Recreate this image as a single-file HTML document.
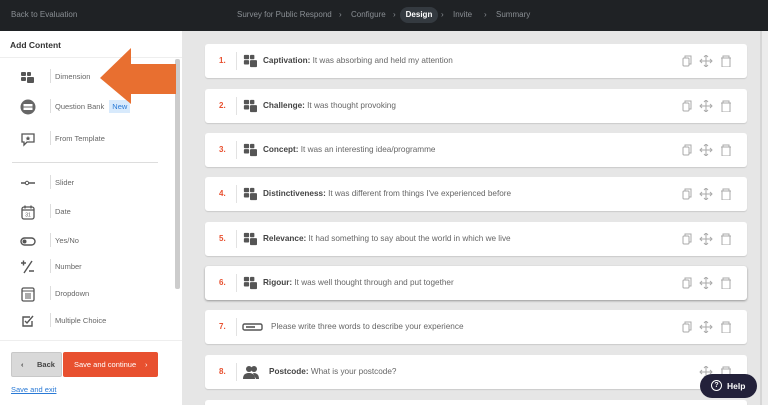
<!DOCTYPE html>
<html><head><meta charset="utf-8"><style>
*{box-sizing:border-box;margin:0;padding:0}
html{width:768px;height:405px;overflow:hidden}
body{width:768px;height:405px;overflow:hidden;background:#e6e6e6;font-family:"Liberation Sans",sans-serif;position:relative}
.hdr{position:absolute;left:0;top:0;width:768px;height:31px;background:#1f2225;color:#8a8f94;font-size:8px}
.hdr span{position:absolute;top:10px}
.pill{position:absolute;left:400px;top:7px;width:38px;height:16px;border-radius:8px;background:#343a40;color:#fff;font-weight:bold;text-align:center;line-height:16px}
.left{position:absolute;left:0;top:31px;width:182px;height:374px;background:#fff}
.item{position:absolute;left:0;width:170px;height:20px}
.item .ic{position:absolute;left:20px;top:2px;width:16px;height:16px}
.item .sep{position:absolute;left:50px;top:2px;width:1px;height:14px;background:#ddd}
.item .t{position:absolute;left:55px;top:5px;font-size:7.5px;color:#666}
.card{position:absolute;left:205px;width:542px;height:34px;background:#fff;border-radius:3px;box-shadow:0 1px 1px rgba(0,0,0,.12)}
.card .n{position:absolute;left:14px;top:12px;font-size:8px;font-weight:bold;color:#e8502f}
.card .vs{position:absolute;left:31px;top:8px;width:1px;height:18px;background:#e2e2e2}
.card .ic{position:absolute;left:38px;top:10px}
.card .t{position:absolute;left:58px;top:12px;font-size:8.2px;color:#666}
.card .t b{color:#444}
.act{position:absolute;right:14px;top:11px;width:52px;height:12px}
</style></head><body>
<div class="hdr">
<span style="left:11px">Back to Evaluation</span>
<span style="left:237px">Survey for Public Respond</span>
<span style="left:339px">›</span>
<span style="left:351px">Configure</span>
<span style="left:393px">›</span>
<div class="pill">Design</div>
<span style="left:441px">›</span>
<span style="left:453px">Invite</span>
<span style="left:484px">›</span>
<span style="left:496px">Summary</span>
</div>
<div class="left">
<div style="position:absolute;left:10px;top:9px;font-size:8.5px;font-weight:bold;color:#333">Add Content</div>
<div style="position:absolute;left:0;top:26px;width:182px;height:1px;background:#eee"></div>
<div style="position:absolute;left:175px;top:28px;width:5px;height:230px;background:#ccc;border-radius:2px"></div>
<div style="position:absolute;left:12px;top:131px;width:146px;height:1px;background:#ddd"></div>
<div style="position:absolute;left:0;top:309px;width:182px;height:1px;background:#eee"></div>
<div style="position:absolute;left:11px;top:321px;width:51px;height:25px;background:#d9d9d9;border:1px solid #c8c8c8;border-radius:2px;font-size:7.5px;font-weight:bold;color:#444;line-height:23px"><span style="position:absolute;left:9px">‹</span><span style="position:absolute;left:25px">Back</span></div>
<div style="position:absolute;left:63px;top:321px;width:95px;height:25px;background:#e8502f;border-radius:2px;font-size:7.5px;color:#fff;line-height:25px"><span style="position:absolute;left:11px">Save and continue</span><span style="position:absolute;left:82px">›</span></div>
<div style="position:absolute;left:11px;top:354px;font-size:7.5px;color:#2a7ad6;text-decoration:underline">Save and exit</div>
</div>
<div class="item" style="top:67px"><svg class="ic" viewBox="0 0 16 16"><rect x="1" y="3" width="5" height="4" rx="1" fill="#555"/><rect x="7" y="3" width="4" height="4" rx="1" fill="#555"/><rect x="1" y="8" width="5" height="4" rx="1" fill="#555"/><rect x="7" y="8" width="7" height="6" rx="1" fill="#555"/></svg><div class="sep"></div><div class="t">Dimension</div></div>
<div class="item" style="top:97px"><svg class="ic" viewBox="0 0 16 16"><circle cx="8" cy="8" r="7.5" fill="#666"/><rect x="3.5" y="5" width="9" height="2.5" fill="#fff"/><rect x="3.5" y="8.5" width="9" height="2.5" fill="#fff"/></svg><div class="sep"></div><div class="t">Question Bank <span style="background:#d8eafc;color:#2a7ad6;padding:2px 3px;margin-left:3px">New</span></div></div>
<div class="item" style="top:129px"><svg class="ic" viewBox="0 0 16 16"><path d="M2 3h12v8H7l-3 3v-3H2z" fill="none" stroke="#555" stroke-width="1.3"/><path d="M8 5l.8 1.6 1.6.2-1.2 1 .3 1.6L8 8.6l-1.5.8.3-1.6-1.2-1 1.6-.2z" fill="#555"/></svg><div class="sep"></div><div class="t">From Template</div></div>
<div class="item" style="top:173px"><svg class="ic" viewBox="0 0 16 16"><path d="M1 8h4M9 8h6" stroke="#555" stroke-width="1.5"/><circle cx="7" cy="8" r="1.7" fill="none" stroke="#555"/></svg><div class="sep"></div><div class="t">Slider</div></div>
<div class="item" style="top:202px"><svg class="ic" viewBox="0 0 16 16"><rect x="2" y="3" width="12" height="12" rx="2" fill="none" stroke="#555" stroke-width="1.3"/><path d="M2 6h12M5 1.5v3M11 1.5v3" stroke="#555" stroke-width="1.3"/><text x="8" y="12.5" font-size="5" text-anchor="middle" fill="#555" font-family="Liberation Sans">31</text></svg><div class="sep"></div><div class="t">Date</div></div>
<div class="item" style="top:231px"><svg class="ic" viewBox="0 0 16 16"><rect x="1" y="5" width="14" height="7" rx="3.5" fill="none" stroke="#555" stroke-width="1.4"/><circle cx="4.5" cy="8.5" r="2" fill="#555"/></svg><div class="sep"></div><div class="t">Yes/No</div></div>
<div class="item" style="top:257px"><svg class="ic" viewBox="0 0 16 16"><path d="M1 4h5M3.5 1.5v5M4 14L12 2M9 12h5" stroke="#555" stroke-width="1.4"/></svg><div class="sep"></div><div class="t">Number</div></div>
<div class="item" style="top:284px"><svg class="ic" viewBox="0 0 16 16"><rect x="2" y="2" width="12" height="13" rx="1.5" fill="none" stroke="#555" stroke-width="1.3"/><path d="M2 5h12M5 8h6M5 10h6M5 12h6" stroke="#555" stroke-width="1.1"/></svg><div class="sep"></div><div class="t">Dropdown</div></div>
<div class="item" style="top:311px"><svg class="ic" viewBox="0 0 16 16"><path d="M12 8v5H3V4h7" fill="none" stroke="#555" stroke-width="1.4"/><path d="M5 8l2 2 6-7" fill="none" stroke="#555" stroke-width="1.4"/></svg><div class="sep"></div><div class="t">Multiple Choice</div></div>
<svg style="position:absolute;left:0;top:0" width="182" height="120"><polygon points="100,78 131,48 131,64 176,64 176,94 131,94 131,104" fill="#e86f30"/></svg>

<div style="position:absolute;left:760px;top:31px;width:8px;height:374px;background:#ececec;border-left:2px solid #d6d6d6"></div>

<div class="card" style="top:44px"><div class="n">1.</div><div class="vs"></div><svg class="ic" width="14" height="14" viewBox="0 0 16 16"><rect x="1" y="1" width="6" height="5" rx="1" fill="#555"/><rect x="8" y="1" width="5" height="5" rx="1" fill="#555"/><rect x="1" y="7" width="6" height="5" rx="1" fill="#555"/><rect x="8" y="7" width="8" height="8" rx="1" fill="#555"/></svg><div class="t"><b>Captivation:</b> It was absorbing and held my attention</div><svg class="act" viewBox="0 0 52 12"><rect x="2" y="3" width="6" height="8" rx="1" fill="none" stroke="#aaa"/><path d="M4 3V1h6v8H8" fill="none" stroke="#aaa"/><path d="M25 0v12M19 6h12M23 2l2-2 2 2M23 10l2 2 2-2M21 4l-2 2 2 2M29 4l2 2-2 2" fill="none" stroke="#aaa"/><path d="M40 3h10M42 3V1h6v2M41 3v9h8V3" fill="none" stroke="#aaa"/></svg></div>
<div class="card" style="top:89px"><div class="n">2.</div><div class="vs"></div><svg class="ic" width="14" height="14" viewBox="0 0 16 16"><rect x="1" y="1" width="6" height="5" rx="1" fill="#555"/><rect x="8" y="1" width="5" height="5" rx="1" fill="#555"/><rect x="1" y="7" width="6" height="5" rx="1" fill="#555"/><rect x="8" y="7" width="8" height="8" rx="1" fill="#555"/></svg><div class="t"><b>Challenge:</b> It was thought provoking</div><svg class="act" viewBox="0 0 52 12"><rect x="2" y="3" width="6" height="8" rx="1" fill="none" stroke="#aaa"/><path d="M4 3V1h6v8H8" fill="none" stroke="#aaa"/><path d="M25 0v12M19 6h12M23 2l2-2 2 2M23 10l2 2 2-2M21 4l-2 2 2 2M29 4l2 2-2 2" fill="none" stroke="#aaa"/><path d="M40 3h10M42 3V1h6v2M41 3v9h8V3" fill="none" stroke="#aaa"/></svg></div>
<div class="card" style="top:133px"><div class="n">3.</div><div class="vs"></div><svg class="ic" width="14" height="14" viewBox="0 0 16 16"><rect x="1" y="1" width="6" height="5" rx="1" fill="#555"/><rect x="8" y="1" width="5" height="5" rx="1" fill="#555"/><rect x="1" y="7" width="6" height="5" rx="1" fill="#555"/><rect x="8" y="7" width="8" height="8" rx="1" fill="#555"/></svg><div class="t"><b>Concept:</b> It was an interesting idea/programme</div><svg class="act" viewBox="0 0 52 12"><rect x="2" y="3" width="6" height="8" rx="1" fill="none" stroke="#aaa"/><path d="M4 3V1h6v8H8" fill="none" stroke="#aaa"/><path d="M25 0v12M19 6h12M23 2l2-2 2 2M23 10l2 2 2-2M21 4l-2 2 2 2M29 4l2 2-2 2" fill="none" stroke="#aaa"/><path d="M40 3h10M42 3V1h6v2M41 3v9h8V3" fill="none" stroke="#aaa"/></svg></div>
<div class="card" style="top:177px"><div class="n">4.</div><div class="vs"></div><svg class="ic" width="14" height="14" viewBox="0 0 16 16"><rect x="1" y="1" width="6" height="5" rx="1" fill="#555"/><rect x="8" y="1" width="5" height="5" rx="1" fill="#555"/><rect x="1" y="7" width="6" height="5" rx="1" fill="#555"/><rect x="8" y="7" width="8" height="8" rx="1" fill="#555"/></svg><div class="t"><b>Distinctiveness:</b> It was different from things I've experienced before</div><svg class="act" viewBox="0 0 52 12"><rect x="2" y="3" width="6" height="8" rx="1" fill="none" stroke="#aaa"/><path d="M4 3V1h6v8H8" fill="none" stroke="#aaa"/><path d="M25 0v12M19 6h12M23 2l2-2 2 2M23 10l2 2 2-2M21 4l-2 2 2 2M29 4l2 2-2 2" fill="none" stroke="#aaa"/><path d="M40 3h10M42 3V1h6v2M41 3v9h8V3" fill="none" stroke="#aaa"/></svg></div>
<div class="card" style="top:222px"><div class="n">5.</div><div class="vs"></div><svg class="ic" width="14" height="14" viewBox="0 0 16 16"><rect x="1" y="1" width="6" height="5" rx="1" fill="#555"/><rect x="8" y="1" width="5" height="5" rx="1" fill="#555"/><rect x="1" y="7" width="6" height="5" rx="1" fill="#555"/><rect x="8" y="7" width="8" height="8" rx="1" fill="#555"/></svg><div class="t"><b>Relevance:</b> It had something to say about the world in which we live</div><svg class="act" viewBox="0 0 52 12"><rect x="2" y="3" width="6" height="8" rx="1" fill="none" stroke="#aaa"/><path d="M4 3V1h6v8H8" fill="none" stroke="#aaa"/><path d="M25 0v12M19 6h12M23 2l2-2 2 2M23 10l2 2 2-2M21 4l-2 2 2 2M29 4l2 2-2 2" fill="none" stroke="#aaa"/><path d="M40 3h10M42 3V1h6v2M41 3v9h8V3" fill="none" stroke="#aaa"/></svg></div>
<div class="card" style="top:266px;box-shadow:0 1px 2px rgba(0,0,0,.35)"><div class="n">6.</div><div class="vs"></div><svg class="ic" width="14" height="14" viewBox="0 0 16 16"><rect x="1" y="1" width="6" height="5" rx="1" fill="#555"/><rect x="8" y="1" width="5" height="5" rx="1" fill="#555"/><rect x="1" y="7" width="6" height="5" rx="1" fill="#555"/><rect x="8" y="7" width="8" height="8" rx="1" fill="#555"/></svg><div class="t"><b>Rigour:</b> It was well thought through and put together</div><svg class="act" viewBox="0 0 52 12"><rect x="2" y="3" width="6" height="8" rx="1" fill="none" stroke="#aaa"/><path d="M4 3V1h6v8H8" fill="none" stroke="#aaa"/><path d="M25 0v12M19 6h12M23 2l2-2 2 2M23 10l2 2 2-2M21 4l-2 2 2 2M29 4l2 2-2 2" fill="none" stroke="#aaa"/><path d="M40 3h10M42 3V1h6v2M41 3v9h8V3" fill="none" stroke="#aaa"/></svg></div>
<div class="card" style="top:310px"><div class="n">7.</div><div class="vs"></div><svg class="ic" style="left:37px;top:13px" width="21" height="8" viewBox="0 0 21 8"><rect x="1" y="1" width="19" height="6" rx="1.5" fill="none" stroke="#555" stroke-width="1.4"/><rect x="4" y="3.2" width="9" height="1.6" fill="#555"/></svg><div class="t" style="left:66px">Please write three words to describe your experience</div><svg class="act" viewBox="0 0 52 12"><rect x="2" y="3" width="6" height="8" rx="1" fill="none" stroke="#aaa"/><path d="M4 3V1h6v8H8" fill="none" stroke="#aaa"/><path d="M25 0v12M19 6h12M23 2l2-2 2 2M23 10l2 2 2-2M21 4l-2 2 2 2M29 4l2 2-2 2" fill="none" stroke="#aaa"/><path d="M40 3h10M42 3V1h6v2M41 3v9h8V3" fill="none" stroke="#aaa"/></svg></div>
<div class="card" style="top:355px"><div class="n">8.</div><div class="vs"></div><svg class="ic" width="16" height="14" viewBox="0 0 16 14"><circle cx="6" cy="4" r="3" fill="#555"/><circle cx="11" cy="4" r="3" fill="#555"/><path d="M0 14c0-5 3-6 6-6s6 1 6 6zM10 8c3 0 6 1 6 6h-3" fill="#555"/></svg><div class="t" style="left:64px"><b>Postcode:</b> What is your postcode?</div><svg class="act" viewBox="0 0 52 12"><path d="M25 0v12M19 6h12M23 2l2-2 2 2M23 10l2 2 2-2M21 4l-2 2 2 2M29 4l2 2-2 2" fill="none" stroke="#aaa"/><path d="M40 3h10M42 3V1h6v2M41 3v9h8V3" fill="none" stroke="#aaa"/></svg></div>
<div class="card" style="top:400px;height:5px;border-radius:3px 3px 0 0"></div>
<div style="position:absolute;left:700px;top:374px;width:57px;height:24px;border-radius:12px;background:#23213a;color:#fff;font-size:8.5px;font-weight:bold;line-height:24px"><span style="position:absolute;left:11px;top:6px;width:11px;height:11px;border:1.3px solid #fff;border-radius:50%;font-size:7px;line-height:9px;text-align:center">?</span><span style="position:absolute;left:27px">Help</span></div>
</body></html>
